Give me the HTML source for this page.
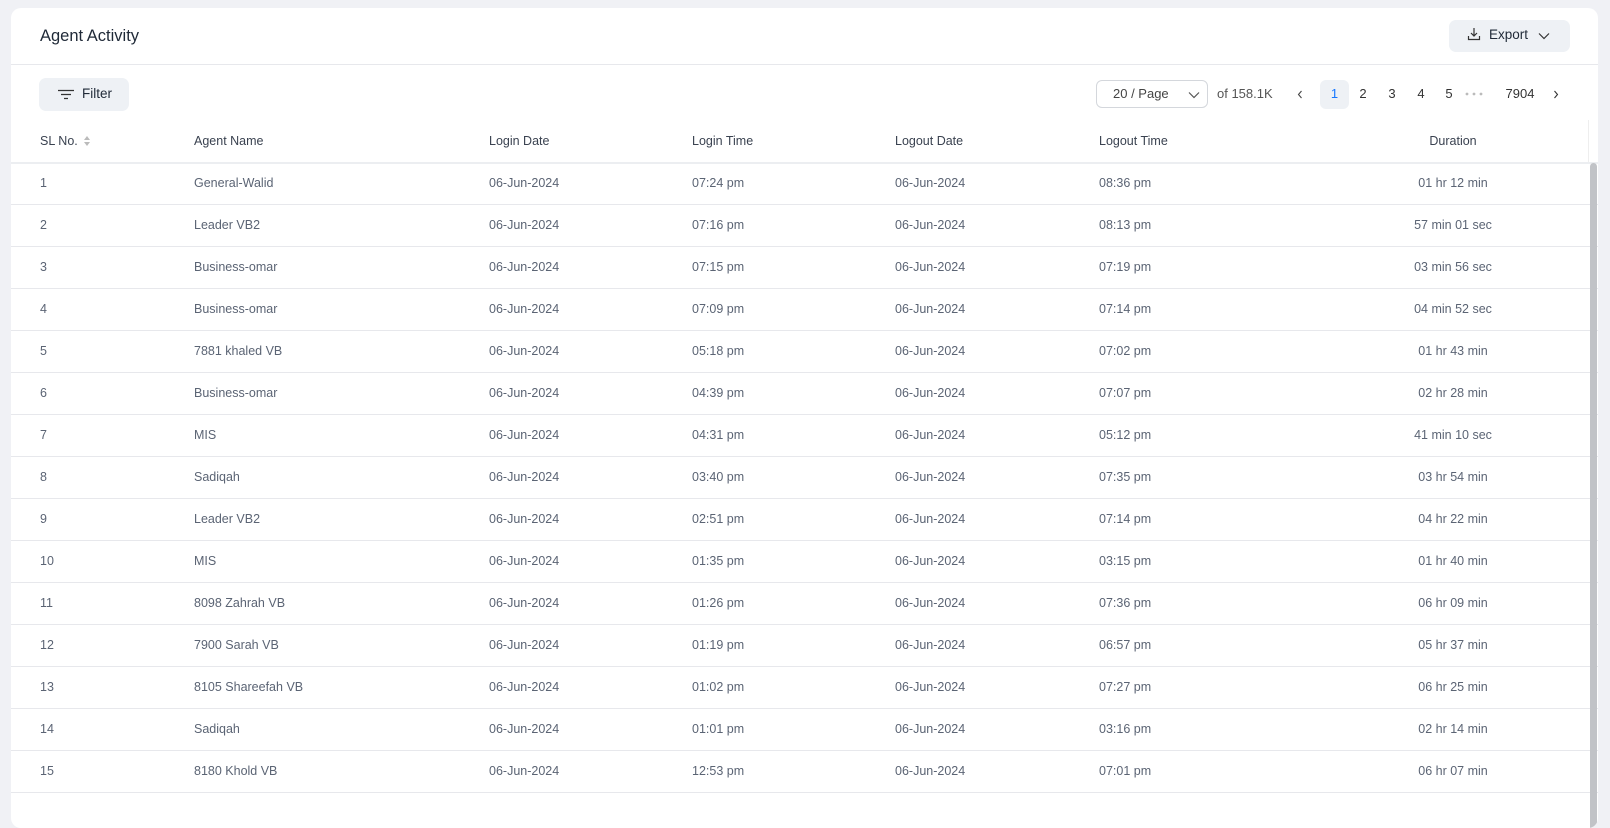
<!DOCTYPE html>
<html><head><meta charset="utf-8"><style>
*{box-sizing:border-box;margin:0;padding:0}
body{width:1610px;height:803px;background:#f0f1f5;font-family:"Liberation Sans",sans-serif;overflow:hidden;position:relative}
.card{position:absolute;left:11px;top:8px;width:1587px;height:820px;background:#fff;border-radius:10px;overflow:hidden}
.abs{position:absolute;white-space:nowrap}
.title{left:29px;top:19px;font-size:16.5px;color:#1f2937}
.hline{position:absolute;left:0;right:0;height:1px;background:#e7e8ec}
.btn{position:absolute;background:#eef1f5;border-radius:7px}
.th{font-size:12.5px;color:#3a4250;top:126px}
.td{font-size:12.5px;color:#5b6474}
.pg{font-size:12.5px;color:#333;text-align:center}
.sb{position:absolute;left:1579px;top:155px;width:7px;height:700px;background:#c1c3c7;border-radius:4px}
</style></head><body>
<div class="card">
<div class="abs title">Agent Activity</div>
<div class="btn" style="left:1438px;top:12px;width:121px;height:32px"></div>
<svg class="abs" style="left:1456px;top:19px" width="14" height="14" viewBox="0 0 14 14" fill="none" stroke="#333" stroke-width="1.2"><path d="M7 1v8M4 6l3 3 3-3M1.5 9v3.5h11V9"/></svg>
<div class="abs" style="left:1478px;top:19px;font-size:13.5px;color:#1f2937">Export</div>
<svg class="abs" style="left:1527px;top:24px" width="12" height="8" viewBox="0 0 12 8" fill="none" stroke="#333" stroke-width="1.2"><path d="M1 1.5l5 5 5-5"/></svg>
<div class="hline" style="top:56px"></div>
<div class="btn" style="left:28px;top:70px;width:90px;height:33px"></div>
<svg class="abs" style="left:47px;top:81px" width="17" height="11" viewBox="0 0 17 11" stroke="#333" stroke-width="1.3"><path d="M0 1.5h16M3 5.5h10M6 9.5h4"/></svg>
<div class="abs" style="left:71px;top:78px;font-size:13.5px;color:#1f2937">Filter</div>
<div class="abs" style="left:1085px;top:72px;width:112px;height:28px;border:1px solid #d4d7dc;border-radius:6px"></div>
<div class="abs" style="left:1102px;top:78px;font-size:13px;color:#444">20 / Page</div>
<svg class="abs" style="left:1177px;top:83px" width="12" height="8" viewBox="0 0 12 8" fill="none" stroke="#555" stroke-width="1.2"><path d="M1 1.5l5 5 5-5"/></svg>
<div class="abs" style="left:1206px;top:78px;font-size:13px;color:#555">of 158.1K</div>
<svg class="abs" style="left:1285px;top:81px" width="8" height="11" viewBox="0 0 8 11" fill="none" stroke="#444" stroke-width="1.1"><path d="M5.5 2L2.5 5.5 5.5 9"/></svg>
<div class="btn" style="left:1309px;top:72px;width:29px;height:29px;border-radius:6px"></div>
<div class="abs pg" style="left:1309px;width:29px;top:78px;color:#1677ff;font-size:13px">1</div>
<div class="abs pg" style="left:1343px;width:18px;top:78px;font-size:13px">2</div>
<div class="abs pg" style="left:1372px;width:18px;top:78px;font-size:13px">3</div>
<div class="abs pg" style="left:1401px;width:18px;top:78px;font-size:13px">4</div>
<div class="abs pg" style="left:1429px;width:18px;top:78px;font-size:13px">5</div>
<svg class="abs" style="left:1454px;top:84px" width="18" height="4" viewBox="0 0 18 4" fill="#bbb"><circle cx="2" cy="2" r="1.4"/><circle cx="9" cy="2" r="1.4"/><circle cx="16" cy="2" r="1.4"/></svg>
<div class="abs pg" style="left:1492px;width:34px;top:78px;font-size:13px">7904</div>
<svg class="abs" style="left:1541px;top:81px" width="8" height="11" viewBox="0 0 8 11" fill="none" stroke="#333" stroke-width="1.1"><path d="M2.5 2l3 3.5-3 3.5"/></svg>
<div class="abs th" style="left:29px">SL No.</div>
<svg class="abs" style="left:72px;top:127px" width="8" height="12" viewBox="0 0 8 12" fill="#bbb"><path d="M4 1L7 5H1zM4 11L1 7h6z"/></svg>
<div class="abs th" style="left:183px">Agent Name</div>
<div class="abs th" style="left:478px">Login Date</div>
<div class="abs th" style="left:681px">Login Time</div>
<div class="abs th" style="left:884px">Logout Date</div>
<div class="abs th" style="left:1088px">Logout Time</div>
<div class="abs th" style="left:1342px;width:200px;text-align:center">Duration</div>
<div class="abs" style="left:1577px;top:112px;width:1px;height:43px;background:#eee"></div>
<div class="hline" style="top:154px;height:2px;background:#eceef1"></div>
<div id="rows"></div>
<div class="sb"></div>
</div>
<script>
var d=[["1","General-Walid","07:24 pm","08:36 pm","01 hr 12 min"],["2","Leader VB2","07:16 pm","08:13 pm","57 min 01 sec"],["3","Business-omar","07:15 pm","07:19 pm","03 min 56 sec"],["4","Business-omar","07:09 pm","07:14 pm","04 min 52 sec"],["5","7881 khaled VB","05:18 pm","07:02 pm","01 hr 43 min"],["6","Business-omar","04:39 pm","07:07 pm","02 hr 28 min"],["7","MIS","04:31 pm","05:12 pm","41 min 10 sec"],["8","Sadiqah","03:40 pm","07:35 pm","03 hr 54 min"],["9","Leader VB2","02:51 pm","07:14 pm","04 hr 22 min"],["10","MIS","01:35 pm","03:15 pm","01 hr 40 min"],["11","8098 Zahrah VB","01:26 pm","07:36 pm","06 hr 09 min"],["12","7900 Sarah VB","01:19 pm","06:57 pm","05 hr 37 min"],["13","8105 Shareefah VB","01:02 pm","07:27 pm","06 hr 25 min"],["14","Sadiqah","01:01 pm","03:16 pm","02 hr 14 min"],["15","8180 Khold VB","12:53 pm","07:01 pm","06 hr 07 min"]];
var h="";
d.forEach(function(r,i){var t=168+42*i;
h+='<div class="abs td" style="left:29px;top:'+t+'px">'+r[0]+'</div><div class="abs td" style="left:183px;top:'+t+'px">'+r[1]+'</div><div class="abs td" style="left:478px;top:'+t+'px">06-Jun-2024</div><div class="abs td" style="left:681px;top:'+t+'px">'+r[2]+'</div><div class="abs td" style="left:884px;top:'+t+'px">06-Jun-2024</div><div class="abs td" style="left:1088px;top:'+t+'px">'+r[3]+'</div><div class="abs td" style="left:1342px;width:200px;text-align:center;top:'+t+'px">'+r[4]+'</div><div class="hline" style="top:'+(196+42*i)+'px"></div>';});
document.getElementById("rows").innerHTML=h;
</script>
</body></html>
